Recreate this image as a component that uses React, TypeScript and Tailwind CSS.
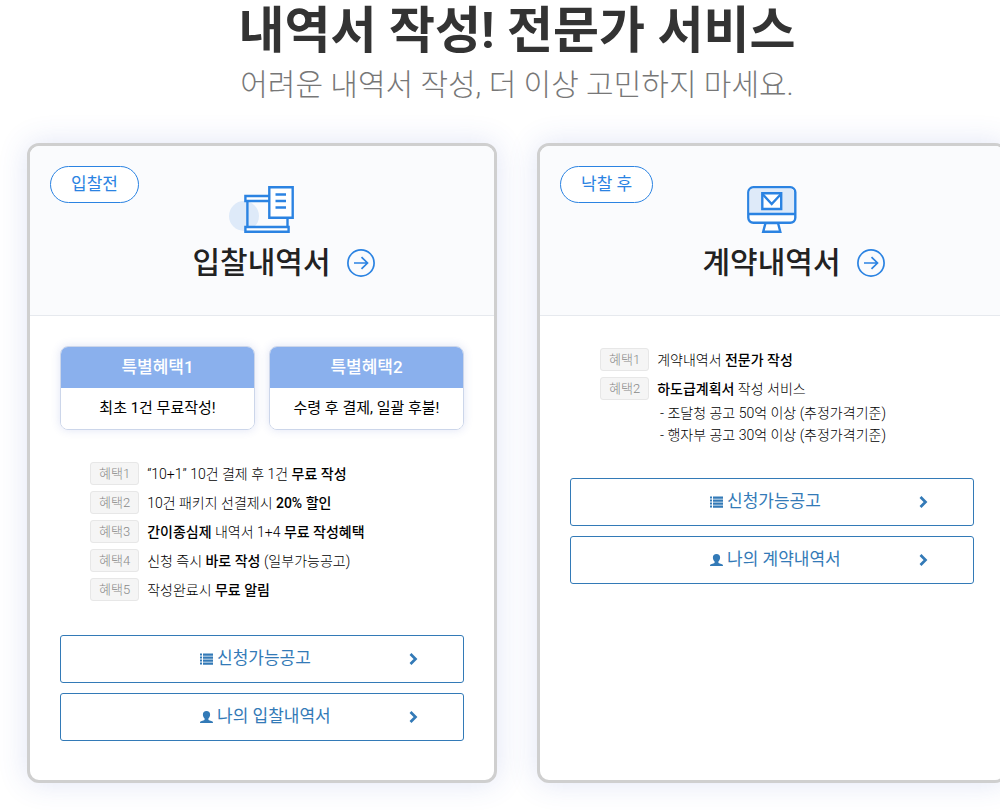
import type { ReactNode } from "react";

type Benefit = { label: string; content: ReactNode };

const bidBenefits: Benefit[] = [
  { label: "혜택1", content: <>“10+1” 10건 결제 후 1건 <Strong>무료 작성</Strong></> },
  { label: "혜택2", content: <>10건 패키지 선결제시 <Strong>20% 할인</Strong></> },
  { label: "혜택3", content: <><Strong>간이종심제</Strong> 내역서 1+4 <Strong>무료 작성혜택</Strong></> },
  { label: "혜택4", content: <>신청 즉시 <Strong>바로 작성</Strong> (일부가능공고)</> },
  { label: "혜택5", content: <>작성완료시 <Strong>무료 알림</Strong></> },
];

const contractBenefits: Benefit[] = [
  { label: "혜택1", content: <>계약내역서 <Strong>전문가 작성</Strong></> },
  { label: "혜택2", content: <><Strong>하도급계획서</Strong> 작성 서비스</> },
];

const specials = [
  { title: "특별혜택1", text: "최초 1건 무료작성!" },
  { title: "특별혜택2", text: "수령 후 결제, 일괄 후불!" },
];

function Strong({ children }: { children: ReactNode }) {
  return <strong className="font-medium">{children}</strong>;
}

function DocumentIcon() {
  return (
    <svg width="66" height="48" viewBox="0 0 66 48" fill="none" stroke="#2b83e2" strokeWidth="2.4" aria-hidden="true">
      <circle cx="15" cy="30" r="15" fill="#deeaf9" stroke="none" />
      <path d="M16.4 10H56V15H16.4z" fill="#fff" />
      <path d="M18.4 15V40M58.5 31V40" />
      <path d="M16.4 41H59.6V45.7H16.4z" fill="#fff" />
      <path d="M40.3 1.3H63.7V31.7H40.3z" fill="#fff" />
      <path d="M46.5 8.5H57M46.5 15H57M46.5 21.5H57" />
    </svg>
  );
}

function MonitorIcon() {
  return (
    <svg width="50" height="48" viewBox="0 0 50 48" fill="none" stroke="#2b83e2" strokeWidth="2.4" aria-hidden="true">
      <path d="M18.5 37L16.2 45.7H33.3L31 37z" fill="#fff" />
      <rect x="1.3" y="1.3" width="47" height="35.5" rx="5" fill="#fff" />
      <path d="M2.5 27.5V6.5a4 4 0 0 1 4-4H43a4 4 0 0 1 4 4v21z" fill="#deeaf9" stroke="none" />
      <path d="M1.3 28H48.3" />
      <path d="M15.3 7.3H34.2V23H15.3z" fill="#fff" />
      <path d="M15.5 8L24.7 18L34 8" />
    </svg>
  );
}

function CircleArrow() {
  return (
    <svg width="28" height="28" viewBox="0 0 28 28" fill="none" stroke="#2b83e2" strokeWidth="1.7" aria-hidden="true">
      <circle cx="14" cy="14" r="13.1" />
      <path d="M7 14H20.5M14.5 8.2L20.5 14L14.5 19.8" />
    </svg>
  );
}

function ListIcon() {
  return (
    <svg width="13" height="12" viewBox="0 0 13 12" fill="currentColor" aria-hidden="true">
      <path d="M0 0.5h2v2H0zM3 0.5h10v2.200H3zM0 3.500h2v2H0zM3 3.500h10v2.200H3zM0 6.500h2v2H0zM3 6.500h10v2.200H3zM0 9.500h2v2H0zM3 9.500h10v2.200H3z" />
    </svg>
  );
}

function UserIcon() {
  return (
    <svg width="13" height="12" viewBox="0 0 13 12" fill="currentColor" aria-hidden="true">
      <path d="M6.5 0C4.200 0 2.900 1.200 2.900 3.500c0 1.700.7 3.200 1.700 4.100v.9c0 .4-.2.5-.6.7L1 10.300C.3 10.600 0 11 0 12h13c0-1-.3-1.400-1-1.700L9 9.200c-.4-.2-.6-.3-.6-.7v-.9c1-.9 1.700-2.400 1.700-4.100C10.100 1.200 8.800 0 6.500 0z" />
    </svg>
  );
}

function Chevron() {
  return (
    <svg width="9" height="12" viewBox="0 0 9 12" fill="none" stroke="currentColor" strokeWidth="2.7" aria-hidden="true">
      <path d="M1.5 1L6.5 6L1.5 11" />
    </svg>
  );
}

function ServiceCard({ stage, title, icon, children }: { stage: string; title: string; icon: ReactNode; children: ReactNode }) {
  return (
    <section className="overflow-hidden rounded-xl border-[3px] border-[#cfcfcf] bg-white shadow-[0_0_30px_rgba(60,90,190,0.16)]">
      <header className="relative flex h-[170px] flex-col items-center border-b border-[#e6e9ee] bg-[#fafbfd] pt-10">
        <span className="absolute top-5 left-5 rounded-full border border-[#2b83e2] bg-white px-5 py-1 text-[17px] leading-[27px] text-[#2b83e2]">
          {stage}
        </span>
        {icon}
        <a href="#" className="mt-2 flex items-center gap-4 pt-px pl-[43px] text-[30px] leading-10 font-medium text-[#222222]">
          {title}
          <CircleArrow />
        </a>
      </header>
      <div className="px-[30px] pt-[30px] pb-[39px]">{children}</div>
    </section>
  );
}

function BenefitList({ items }: { items: Benefit[] }) {
  return (
    <ul className="flex flex-col gap-1.5 px-[30px] text-sm font-light text-black">
      {items.map((item) => (
        <li key={item.label} className="flex items-center gap-2">
          <span className="rounded-[3px] border border-[#e7e7e7] bg-[#f5f5f5] px-2 text-[13px] leading-[21px] text-[#888888]">
            {item.label}
          </span>
          <span className="leading-5">{item.content}</span>
        </li>
      ))}
    </ul>
  );
}

function ActionLink({ icon, label }: { icon: ReactNode; label: string }) {
  return (
    <a
      href="#"
      className="flex h-12 items-center rounded-[3px] border border-[#337ab7] bg-white pr-[45px] pl-[139px] text-[17px] text-[#337ab7] hover:bg-blue-50"
    >
      {icon}
      <span className="ml-1 flex-1">{label}</span>
      <Chevron />
    </a>
  );
}

export default function App() {
  return (
    <div className="overflow-hidden bg-white font-['Roboto','Noto_Sans_CJK_KR',sans-serif]">
      <main className="min-w-[1034px] px-[27px] pb-7">
        <div className="pb-9 text-center">
          <h1 className="text-[50px] leading-[62px] font-bold text-[#333333]">내역서 작성! 전문가 서비스</h1>
          <p className="text-3xl leading-[45px] font-light text-[#777777]">어려운 내역서 작성, 더 이상 고민하지 마세요.</p>
        </div>
        <div className="grid grid-cols-2 gap-10">
          <ServiceCard stage="입찰전" title="입찰내역서" icon={<DocumentIcon />}>
            <div className="mb-8 grid grid-cols-2 gap-3.5">
              {specials.map((item) => (
                <div
                  key={item.title}
                  className="overflow-hidden rounded-lg border border-[#ccd6ea] text-center shadow-[0_0_10px_rgba(60,90,190,0.16)]"
                >
                  <h3 className="bg-[#8ab0ed] text-[17px] leading-[41px] font-medium text-white">{item.title}</h3>
                  <p className="bg-white text-[15px] leading-[41px] text-black">{item.text}</p>
                </div>
              ))}
            </div>
            <BenefitList items={bidBenefits} />
            <div className="mt-[34px] flex flex-col gap-2.5">
              <ActionLink icon={<ListIcon />} label="신청가능공고" />
              <ActionLink icon={<UserIcon />} label="나의 입찰내역서" />
            </div>
          </ServiceCard>
          <ServiceCard stage="낙찰 후" title="계약내역서" icon={<MonitorIcon />}>
            <div className="pt-0.5">
              <BenefitList items={contractBenefits} />
              <ul className="pt-0.5 pl-[90px] text-sm leading-[22px] font-light text-black">
                <li>- 조달청 공고 50억 이상 (추정가격기준)</li>
                <li>- 행자부 공고 30억 이상 (추정가격기준)</li>
              </ul>
            </div>
            <div className="mt-8 flex flex-col gap-2.5">
              <ActionLink icon={<ListIcon />} label="신청가능공고" />
              <ActionLink icon={<UserIcon />} label="나의 계약내역서" />
            </div>
          </ServiceCard>
        </div>
      </main>
    </div>
  );
}
